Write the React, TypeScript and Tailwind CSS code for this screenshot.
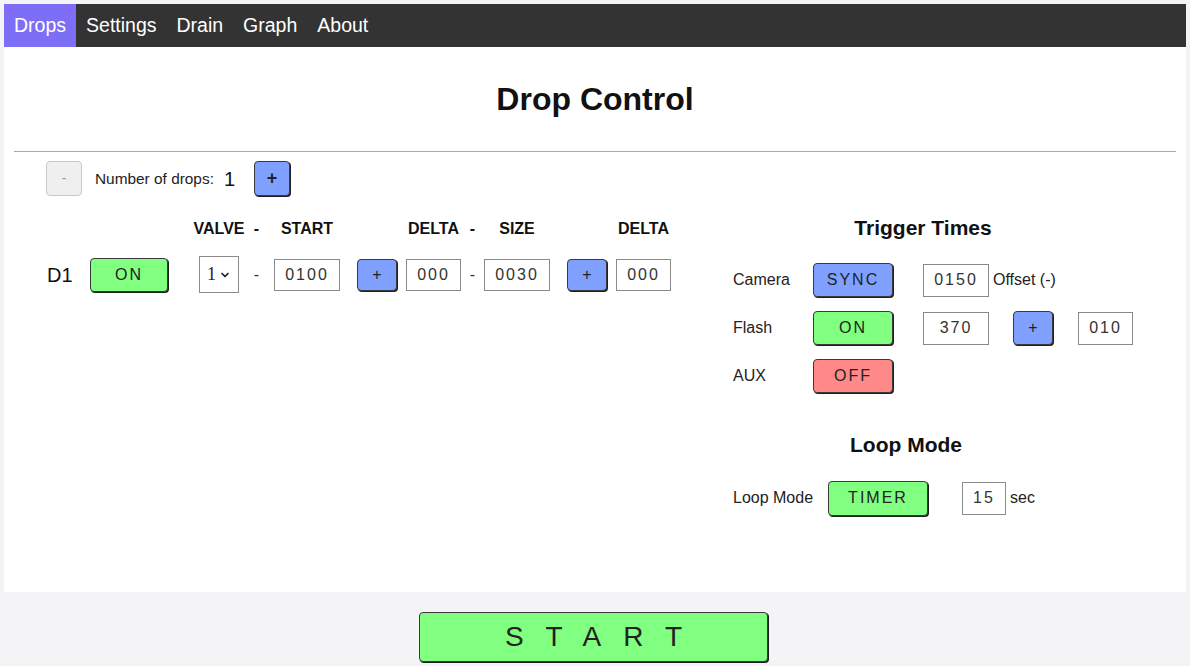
import { ChevronDown } from "lucide-react";

const btn =
  "flex items-center justify-center rounded-[4px] border border-[#3a3a3a] shadow-[1px_1px_0_#1f1f1f] text-[16px] tracking-[2px] text-[#222]";
const field =
  "flex items-center justify-center border border-[#8a8a8a] bg-white text-[16px] tracking-[2px] text-[#333]";

function Field({ value, className }: { value: string; className: string }) {
  return <div className={`${field} ${className}`}>{value}</div>;
}

export default function App() {
  return (
    <div className="min-h-screen bg-[#f4f4f6] pt-1 font-['Liberation_Sans',Arial,sans-serif] text-[#111]">
      <div className="mx-1 h-[588px] bg-white">
        <nav className="flex h-[43px] bg-[#333] text-[19.5px] leading-[43px] text-white">
          <span className="bg-[#7d6ef5] px-[10px]">Drops</span>
          <span className="px-[10px]">Settings</span>
          <span className="px-[10px]">Drain</span>
          <span className="px-[10px]">Graph</span>
          <span className="px-[10px]">About</span>
        </nav>

        <h1 className="mt-[34px] text-center text-[32px] font-bold leading-[37px]">Drop Control</h1>
        <hr className="mx-[10px] mt-[33px] border-t border-[#aaa]" />

        <div className="mt-[9px] flex h-[35px] items-center pl-[42px]">
          <div className="flex h-[35px] w-[36px] items-center justify-center rounded-[4px] border border-[#c8c8c8] bg-[#efefef] text-[14px] text-[#999]">
            -
          </div>
          <span className="ml-[13px] text-[15.4px] text-[#222]">Number of drops:</span>
          <span className="ml-[10px] text-[20px] font-medium">1</span>
          <div className={`${btn} ml-[19px] h-[35px] w-[36px] bg-[#80a0ff] text-[18px] font-bold tracking-normal`}>+</div>
        </div>

        <div className="flex">
          <div className="w-[729px] pl-[43px]">
            <div className="mt-[24px] grid h-[18px] grid-cols-[43px_78px_31px_40px_35px_66px_17px_40px_9px_55px_23px_66px_17px_40px_9px_55px] text-[16px] font-bold leading-[18px] whitespace-nowrap">
              <div className="col-start-4 flex justify-center">VALVE</div>
              <div className="col-start-5 flex justify-center">-</div>
              <div className="col-start-6 flex justify-center">START</div>
              <div className="col-start-10 flex justify-center">DELTA</div>
              <div className="col-start-11 flex justify-center">-</div>
              <div className="col-start-12 flex justify-center">SIZE</div>
              <div className="col-start-16 flex justify-center">DELTA</div>
            </div>

            <div className="mt-[18px] grid h-[37px] grid-cols-[43px_78px_31px_40px_35px_66px_17px_40px_9px_55px_23px_66px_17px_40px_9px_55px] items-center">
              <span className="text-[20px]">D1</span>
              <div className={`${btn} h-[34px] w-[78px] bg-[#80ff80]`}>ON</div>
              <span />
              <div className="col-start-4 flex h-[37px] w-[40px] items-center justify-center gap-[3px] border border-[#8a8a8a] bg-white font-['Liberation_Serif',serif] text-[18px] text-[#222]">
                1
                <ChevronDown size={12} strokeWidth={3.5} />
              </div>
              <span className="flex justify-center text-[16px] text-[#333]">-</span>
              <Field value="0100" className="h-[32px] w-[66px]" />
              <span />
              <div className={`${btn} col-start-8 h-[32px] w-[40px] bg-[#80a0ff] text-[14px] tracking-normal`}>+</div>
              <span />
              <Field value="000" className="col-start-10 h-[32px] w-[55px]" />
              <span className="flex justify-center text-[16px] text-[#333]">-</span>
              <Field value="0030" className="h-[32px] w-[66px]" />
              <span />
              <div className={`${btn} col-start-14 h-[32px] w-[40px] bg-[#80a0ff] text-[14px] tracking-normal`}>+</div>
              <span />
              <Field value="000" className="col-start-16 h-[32px] w-[55px]" />
            </div>
          </div>

          <div className="text-[16px] text-[#222]">
            <h2 className="mt-[20px] w-[380px] text-center text-[21px] font-bold leading-[24px] text-[#111]">Trigger Times</h2>
            <div className="mt-[23px] flex flex-col gap-[14px]">
              <div className="flex h-[34px] items-center">
                <span className="w-[80px]">Camera</span>
                <div className={`${btn} h-[34px] w-[80px] bg-[#80a0ff]`}>SYNC</div>
                <Field value="0150" className="ml-[30px] h-[33px] w-[66px]" />
                <span className="ml-[4px]">Offset (-)</span>
              </div>
              <div className="flex h-[34px] items-center">
                <span className="w-[80px]">Flash</span>
                <div className={`${btn} h-[34px] w-[80px] bg-[#80ff80]`}>ON</div>
                <Field value="370" className="ml-[30px] h-[33px] w-[66px]" />
                <div className={`${btn} ml-[24px] h-[34px] w-[40px] bg-[#80a0ff] text-[14px] tracking-normal`}>+</div>
                <Field value="010" className="ml-[25px] h-[33px] w-[55px]" />
              </div>
              <div className="flex h-[34px] items-center">
                <span className="w-[80px]">AUX</span>
                <div className={`${btn} h-[34px] w-[80px] bg-[#ff8888]`}>OFF</div>
              </div>
            </div>

            <h2 className="mt-[40px] w-[346px] text-center text-[21px] font-bold leading-[24px] text-[#111]">Loop Mode</h2>
            <div className="mt-[23px] flex h-[36px] items-center">
              <span className="w-[95px]">Loop Mode</span>
              <div className={`${btn} h-[35px] w-[100px] bg-[#80ff80]`}>TIMER</div>
              <Field value="15" className="ml-[34px] h-[33px] w-[44px]" />
              <span className="ml-[4px]">sec</span>
            </div>
          </div>
        </div>
      </div>

      <div className="flex justify-center pr-[3px] pt-[20px]">
        <div className={`${btn} h-[50px] w-[349px] bg-[#80ff80] pl-[22px] text-[28px] tracking-[22px] text-[#111]`}>START</div>
      </div>
    </div>
  );
}
